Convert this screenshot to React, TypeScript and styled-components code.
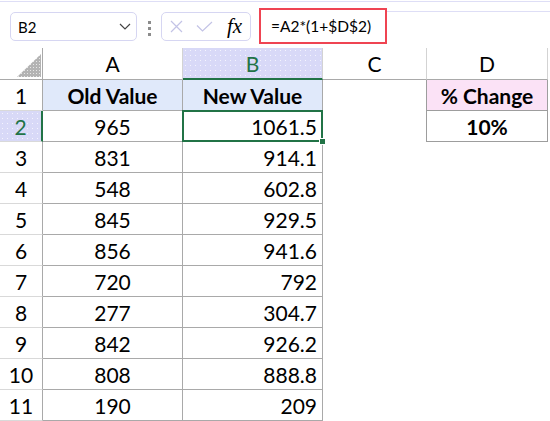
import React from "react";
import styled, { createGlobalStyle, css } from "styled-components";

const GlobalStyle = createGlobalStyle`
  html, body {
    margin: 0;
    padding: 0;
    background: #ffffff;
  }
  body {
    font-family: Lato, "Open Sans", sans-serif;
    color: #000000;
  }
`;

const GREEN = "#217346";
const GRID = "#a9a9a9";

const Page = styled.div`
  width: 550px;
  height: 421px;
  overflow: hidden;
  background: #ffffff;
`;

const Toolbar = styled.div`
  margin-top: 1px;
  height: 47px;
  border-top: 1px solid #dedef6;
  box-sizing: border-box;
  display: flex;
  align-items: flex-start;
  padding-left: 10px;
`;

const NameBox = styled.div`
  margin-top: 10px;
  width: 127px;
  height: 29px;
  box-sizing: border-box;
  border: 1px solid #d6d6f2;
  border-radius: 5px;
  display: flex;
  align-items: center;
  justify-content: space-between;
  padding: 0 5px 0 7px;
  font-size: 15px;
`;

const Grip = styled.div`
  margin: 19px 0 0 11px;
  width: 3px;
  display: flex;
  flex-direction: column;
  gap: 3px;

  span {
    width: 3px;
    height: 3px;
    background: #8c8c8c;
  }
`;

const IconBox = styled.div`
  margin: 10px 0 0 10px;
  width: 90px;
  height: 29px;
  box-sizing: border-box;
  border: 1px solid #d6d6f2;
  border-radius: 5px;
  display: flex;
  align-items: center;
  padding-left: 8px;
  gap: 13px;
`;

const Fx = styled.span`
  font-family: "Liberation Serif", "DejaVu Serif", serif;
  font-style: italic;
  font-size: 21px;
  margin-left: 1px;
  line-height: 1;
`;

const FormulaBar = styled.div`
  flex: 1;
  margin: 6px 0 0 8px;
  display: flex;
  align-items: flex-start;
`;

const Highlight = styled.div`
  width: 128px;
  height: 36px;
  box-sizing: border-box;
  border: 2px solid #ef4452;
  display: flex;
  align-items: center;
  padding-left: 10px;
  font-size: 15.5px;
`;

const BarLine = styled.div`
  flex: 1;
  margin-top: 3px;
  border-top: 1px solid #dedef6;
`;

const Sheet = styled.div`
  display: grid;
  grid-template-columns: 43px 140px 140px 104px 121px 2px;
  grid-template-rows: 32px;
  grid-auto-rows: 31px;
`;

const lavender = css`
  background-color: #d8d9f7;
  background-image: radial-gradient(circle, #f4f4fd 0.6px, transparent 0.9px);
  background-size: 5px 5px;
`;

const base = css`
  box-sizing: border-box;
  display: flex;
  align-items: center;
  font-size: 21px;
`;

const Corner = styled.div`
  ${base};
  border-right: 1px solid ${GRID};
  border-bottom: 1px solid ${GRID};
  justify-content: flex-end;
  align-items: flex-end;
  padding: 0 1px 2px 0;
`;

const ColHead = styled.div<{ $active?: boolean }>`
  ${base};
  justify-content: center;
  border-right: 1px solid #d3d3d3;
  border-bottom: 1px solid ${GRID};
  ${({ $active }) =>
    $active &&
    css`
      ${lavender};
      color: ${GREEN};
      border-bottom: 2px solid ${GREEN};
    `}
`;

const RowHead = styled.div<{ $active?: boolean }>`
  ${base};
  justify-content: center;
  border-right: 1px solid ${GRID};
  border-bottom: 1px solid #d9d9d9;
  ${({ $active }) =>
    $active &&
    css`
      ${lavender};
      color: ${GREEN};
      border-right: 2px solid ${GREEN};
    `}
`;

type Tint = "blue" | "pink";

const Cell = styled.div<{
  $align?: "center" | "right";
  $bold?: boolean;
  $tint?: Tint;
  $lined?: boolean;
  $selected?: boolean;
}>`
  ${base};
  position: relative;
  justify-content: ${({ $align }) => ($align === "right" ? "flex-end" : "center")};
  padding-right: ${({ $align }) => ($align === "right" ? "5px" : "0")};
  font-weight: ${({ $bold }) => ($bold ? 700 : 400)};
  background: ${({ $tint }) =>
    $tint === "blue" ? "#e0e9fa" : $tint === "pink" ? "#fbe2f6" : "transparent"};
  ${({ $lined }) =>
    $lined &&
    css`
      border-right: 1px solid ${GRID};
      border-bottom: 1px solid ${GRID};
    `}
  ${({ $selected }) =>
    $selected &&
    css`
      &::after {
        content: "";
        position: absolute;
        left: -1px;
        top: -1px;
        right: -1px;
        bottom: -1px;
        border: 2px solid ${GREEN};
      }
      &::before {
        content: "";
        position: absolute;
        right: -4px;
        bottom: -4px;
        width: 5px;
        height: 5px;
        background: ${GREEN};
        border: 1px solid #ffffff;
        z-index: 1;
      }
    `}
`;

const DCell = styled(Cell)`
  border-left: 1px solid #9d9d9d;
  margin-left: -1px;
  border-right: 1px solid #9d9d9d;
  border-bottom: 1px solid #9d9d9d;
`;

const Blank = styled.div``;

const rows: [number, string][] = [
  [965, "1061.5"],
  [831, "914.1"],
  [548, "602.8"],
  [845, "929.5"],
  [856, "941.6"],
  [720, "792"],
  [277, "304.7"],
  [842, "926.2"],
  [808, "888.8"],
  [190, "209"],
];

const Chevron = () => (
  <svg width="12" height="7" viewBox="0 0 12 7" fill="none">
    <path d="M1 1l5 5 5-5" stroke="#444" strokeWidth="1.2" />
  </svg>
);

const Cross = () => (
  <svg width="13" height="13" viewBox="0 0 13 13" fill="none">
    <path d="M1 1l11 11M12 1L1 12" stroke="#c3c3e6" strokeWidth="1.2" />
  </svg>
);

const Check = () => (
  <svg width="17" height="11" viewBox="0 0 17 11" fill="none">
    <path d="M1 4.5l5.5 5.5L16 1" stroke="#c3c3e6" strokeWidth="1.2" />
  </svg>
);

const CornerMark = () => (
  <svg width="24" height="23" viewBox="0 0 24 23">
    <defs>
      <pattern id="dots" width="3" height="3" patternUnits="userSpaceOnUse">
        <rect width="3" height="3" fill="#b3b3b3" />
        <rect x="1" y="1" width="1" height="1" fill="#e6e6e6" />
      </pattern>
    </defs>
    <polygon points="0,23 24,0 24,23" fill="url(#dots)" />
  </svg>
);

export default function App() {
  return (
    <Page>
      <GlobalStyle />
      <Toolbar>
        <NameBox>
          <span>B2</span>
          <Chevron />
        </NameBox>
        <Grip>
          <span />
          <span />
          <span />
        </Grip>
        <IconBox>
          <Cross />
          <Check />
          <Fx>fx</Fx>
        </IconBox>
        <FormulaBar>
          <Highlight>=A2*(1+$D$2)</Highlight>
          <BarLine />
        </FormulaBar>
      </Toolbar>

      <Sheet>
        <Corner>
          <CornerMark />
        </Corner>
        <ColHead>A</ColHead>
        <ColHead $active>B</ColHead>
        <ColHead>C</ColHead>
        <ColHead>D</ColHead>
        <Blank />

        <RowHead>1</RowHead>
        <Cell $lined $bold $tint="blue">
          Old Value
        </Cell>
        <Cell $lined $bold $tint="blue">
          New Value
        </Cell>
        <Blank />
        <DCell $bold $tint="pink">
          % Change
        </DCell>
        <Blank />

        {rows.map(([oldV, newV], i) => (
          <React.Fragment key={i}>
            <RowHead $active={i === 0}>{i + 2}</RowHead>
            <Cell $lined>{oldV}</Cell>
            <Cell $lined $align="right" $selected={i === 0}>
              {newV}
            </Cell>
            <Blank />
            {i === 0 ? <DCell $bold>10%</DCell> : <Blank />}
            <Blank />
          </React.Fragment>
        ))}
      </Sheet>
    </Page>
  );
}
